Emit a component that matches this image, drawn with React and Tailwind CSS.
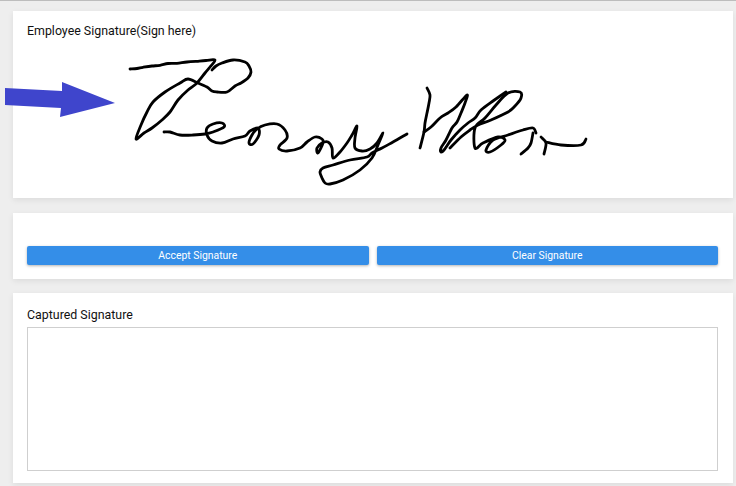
const STROKES = [
  // P
  [[130,69],[137,68.5],[143,67.3],[152,66],[160,65.3],[168,63.5],[177,63.3],[187,62],[197,61.3],[206,60.5],[215,60],[210,67],[205,73],[197,83],[188,90],[178,100],[170,112],[162,120],[152,128],[144,133],[136,139],[141,125],[147,112],[153,102],[165,92],[180,83],[188,79],[198,83],[207,87],[212,91],[217,92],[227,92],[235,86],[241,83],[248,78],[251,72],[249,66],[245,62],[233,60],[222,63],[216,66],[212,70]],
  // erry
  [[164,132],[170,132],[180,135],[193,135],[205,134],[213,132],[224,127],[222,123],[213,124],[207,128],[207,135],[212,141],[222,143],[233,139],[245,136],[250,131],[258,128],[259,135],[253,144],[249,143],[252,135],[257,129],[265,125],[277,124],[285,130],[287,138],[280,145],[279,149],[287,151],[300,148],[307,142],[315,137],[322,139],[323,143],[318,153],[317,148],[322,143],[328,142],[332,148],[333,158],[340,152],[347,143],[352,135],[357,126],[355,138],[355,148],[362,151],[370,149],[377,143],[383,133],[378,145],[372,158],[360,170],[343,180],[330,184],[325,183],[322,178],[320,172],[323,168],[333,165],[350,160],[367,157],[372,153],[382,148],[393,142],[407,134]],
  // V
  [[427,88],[430,95],[429,103],[427,113],[425,123],[424,132],[420,148]],
  [[424,132],[431,127],[440,118],[448,113],[456,107],[467,95],[465,103],[461,113],[457,122],[452,128],[446,140],[441,148],[441,152],[444,150],[451,140],[460,130],[468,123],[475,118],[481,110],[493,101],[506,92]],
  // h and o
  [[450,148],[461,137],[470,130],[478,125],[491,120],[508,112],[515,106],[521,98],[520,92],[508,93],[496,105],[485,118],[475,128],[475,148],[483,143],[498,137],[505,140],[501,145],[490,152],[486,150],[493,140],[508,135],[523,130],[533,128],[536,133]],
  // z
  [[533,133],[531,143],[528,148],[521,154]],
  // n and tail
  [[541,137],[546,143],[544,154]],
  [[546,142],[561,145],[581,145],[586,139]],
];

// Catmull-Rom through every point, so the sharp pen turns stay in place
function smooth(points) {
  let d = `M${points[0][0]} ${points[0][1]}`;
  for (let i = 0; i < points.length - 1; i++) {
    const p0 = points[i - 1] || points[i];
    const p1 = points[i];
    const p2 = points[i + 1];
    const p3 = points[i + 2] || p2;
    const c1x = (p1[0] + (p2[0] - p0[0]) / 6).toFixed(1);
    const c1y = (p1[1] + (p2[1] - p0[1]) / 6).toFixed(1);
    const c2x = (p2[0] - (p3[0] - p1[0]) / 6).toFixed(1);
    const c2y = (p2[1] - (p3[1] - p1[1]) / 6).toFixed(1);
    d += ` C${c1x} ${c1y} ${c2x} ${c2y} ${p2[0]} ${p2[1]}`;
  }
  return d;
}

function Card({ className, children }) {
  return (
    <section className={`bg-white shadow-[0_2px_6px_rgba(0,0,0,0.08)] px-[14px] ${className}`}>
      {children}
    </section>
  );
}

function ActionButton({ children }) {
  return (
    <button className="flex-1 h-[19px] rounded-[2px] bg-[#348ee8] text-white text-[10.4px] shadow-[0_1px_3px_rgba(0,0,0,0.3)]">
      {children}
    </button>
  );
}

export default function App() {
  return (
    <div className="w-[736px] h-[486px] overflow-hidden bg-[#eeeeee] border-t border-[#bdbdbd] pt-[10px] pl-[13px] pr-[3px] font-['Roboto',sans-serif] flex flex-col gap-[14px]">
      {/* Signature pad */}
      <Card className="h-[187px] mb-px pt-[12px]">
        <h2 className="text-[12.4px] leading-[16px] font-normal text-[#111111]">Employee Signature(Sign here)</h2>
        <svg
          className="block -ml-[14px] mt-[6px] overflow-visible"
          width="720"
          height="150"
          viewBox="13 45 720 150"
        >
          <polygon points="5,88 62,91 62,82 115,103 60,117 61,108 5,105" fill="#3f45cc" />
          {STROKES.map((points, i) => (
            <path
              key={i}
              d={smooth(points)}
              fill="none"
              stroke="#000"
              strokeWidth="2.8"
              strokeLinecap="round"
              strokeLinejoin="round"
            />
          ))}
        </svg>
      </Card>

      {/* Actions */}
      <Card className="h-[66px] pt-[33px]">
        <div className="flex gap-[8px] pr-px">
          <ActionButton>Accept Signature</ActionButton>
          <ActionButton>Clear Signature</ActionButton>
        </div>
      </Card>

      {/* Captured preview */}
      <Card className="h-[190px] pt-[14px]">
        <h2 className="text-[12.4px] leading-[16px] font-normal text-[#111111]">Captured Signature</h2>
        <div className="mt-[4px] h-[144px] border border-[#cfcfcf] mr-px" />
      </Card>
    </div>
  );
}
